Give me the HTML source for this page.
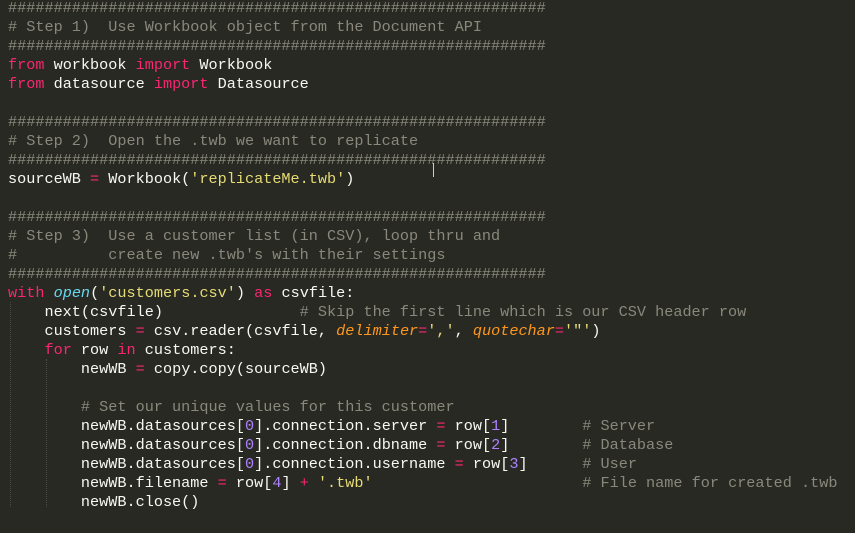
<!DOCTYPE html>
<html><head><meta charset="utf-8"><style>
html,body{margin:0;padding:0;background:#282923;width:855px;height:533px;overflow:hidden}
pre{margin:0;position:absolute;left:8px;top:-1.5px;font-family:"Liberation Mono",monospace;font-size:15.2px;line-height:19px;color:#f8f8f2}
.c{color:#8a887c}.k{color:#f92672}.s{color:#e6db74}.n{color:#ae81ff}.f{color:#66d9ef;font-style:italic}.p{color:#fd971f;font-style:italic}
.g{position:absolute;width:0;border-left:1px dotted #4a4a42}
</style></head><body>
<div class="g" style="left:10px;top:302px;height:205px"></div>
<div class="g" style="left:46px;top:359px;height:148px"></div>
<pre><span class="c">###########################################################
# Step 1)  Use Workbook object from the Document API
###########################################################</span>
<span class="k">from</span> workbook <span class="k">import</span> Workbook
<span class="k">from</span> datasource <span class="k">import</span> Datasource

<span class="c">###########################################################
# Step 2)  Open the .twb we want to replicate
###########################################################</span>
sourceWB <span class="k">=</span> Workbook(<span class="s">'replicateMe.twb'</span>)

<span class="c">###########################################################
# Step 3)  Use a customer list (in CSV), loop thru and
#          create new .twb's with their settings
###########################################################</span>
<span class="k">with</span> <span class="f">open</span>(<span class="s">'customers.csv'</span>) <span class="k">as</span> csvfile:
    next(csvfile)               <span class="c"># Skip the first line which is our CSV header row</span>
    customers <span class="k">=</span> csv.reader(csvfile, <span class="p">delimiter</span><span class="k">=</span><span class="s">','</span>, <span class="p">quotechar</span><span class="k">=</span><span class="s">'"'</span>)
    <span class="k">for</span> row <span class="k">in</span> customers:
        newWB <span class="k">=</span> copy.copy(sourceWB)

        <span class="c"># Set our unique values for this customer</span>
        newWB.datasources[<span class="n">0</span>].connection.server <span class="k">=</span> row[<span class="n">1</span>]        <span class="c"># Server</span>
        newWB.datasources[<span class="n">0</span>].connection.dbname <span class="k">=</span> row[<span class="n">2</span>]        <span class="c"># Database</span>
        newWB.datasources[<span class="n">0</span>].connection.username <span class="k">=</span> row[<span class="n">3</span>]      <span class="c"># User</span>
        newWB.filename <span class="k">=</span> row[<span class="n">4</span>] <span class="k">+</span> <span class="s">'.twb'</span>                       <span class="c"># File name for created .twb</span>
        newWB.close()</pre>
<div style="position:absolute;left:433px;top:163px;width:1px;height:14px;background:#ccc"></div>
</body></html>
